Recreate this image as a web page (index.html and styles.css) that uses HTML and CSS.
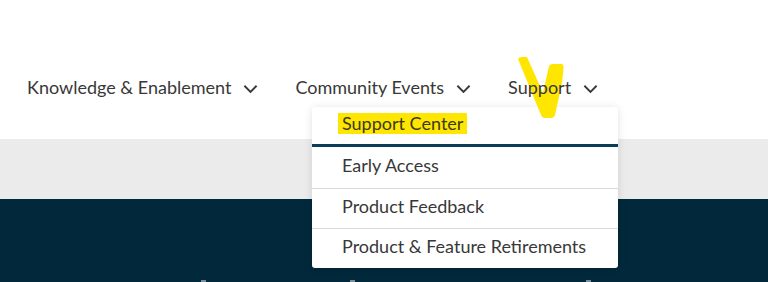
FILE: index.html
```html
<!DOCTYPE html>
<html>
<head>
<meta charset="utf-8">
<link rel="stylesheet" href="styles.css">
</head>
<body>
<header class="header">
  <nav class="nav">
    <div class="nav-item">Knowledge &amp; Enablement <svg class="chev" viewBox="0 0 16 10"><path d="M1.5 1.5 L8 8 L14.5 1.5" /></svg></div>
    <div class="nav-item">Community Events <svg class="chev" viewBox="0 0 16 10"><path d="M1.5 1.5 L8 8 L14.5 1.5" /></svg></div>
    <div class="nav-item support">
      <svg class="scribble" viewBox="0 0 50 64"><path d="M0 2 Q1 0 4 0 L9 0 L25 36 L31 9 Q32 7 35 7 L44 7 Q46 8 45.5 12 L44 26 L37 58 Q36 61 33 61 L27 61 Q24 61 23 58 Z"/></svg>
      <span class="label">Support</span> <svg class="chev" viewBox="0 0 16 10"><path d="M1.5 1.5 L8 8 L14.5 1.5" /></svg>
    </div>
  </nav>
  <div class="dropdown">
    <div class="dd-item first"><span class="hl">Support Center</span></div>
    <div class="dd-item">Early Access</div>
    <div class="dd-item">Product Feedback</div>
    <div class="dd-item last">Product &amp; Feature Retirements</div>
  </div>
</header>
<div class="band"></div>
<section class="dark">
  <div class="ticks"><span class="tick t1"></span><span class="tick t2"></span><span class="tick t3"></span></div>
</section>
</body>
</html>
```
FILE: styles.css
```css
html, body { margin: 0; padding: 0; }
body { font-family: "Lato", "Noto Sans", sans-serif; color: #383838; background: #02283b; height: 282px; overflow: hidden; }
.header { position: relative; height: 139px; background: #fff; }
.nav { display: flex; align-items: center; padding: 76px 0 0 27px; gap: 37px; height: 22px; }
.nav-item { position: relative; display: flex; align-items: center; gap: 12px; font-size: 18px; white-space: nowrap; }
.nav-item .label { position: relative; z-index: 8; }
.chev { width: 15px; height: 10px; fill: none; stroke: #383838; stroke-width: 2; margin-top: 3px; }
.scribble { position: absolute; left: 10px; top: -19px; width: 50px; height: 64px; fill: #ffe600; z-index: 7; }
.dropdown { position: absolute; left: 312px; top: 107px; width: 306px; background: #fff; border-radius: 3px; box-shadow: 0 1px 8px rgba(0,0,0,0.12); z-index: 5; }
.dd-item { height: 40px; box-sizing: border-box; display: flex; align-items: center; padding: 0 0 5px 30px; font-size: 18px; border-top: 1px solid #d9d9d9; }
.dd-item.first { height: 37px; border-top: none; border-bottom: 3px solid #0c3c58; align-items: flex-start; padding: 0 0 0 26px; box-sizing: content-box; }
.dd-item.first + .dd-item { border-top: none; height: 41px; }
.hl { background: #ffe600; color: #3a3a1a; padding: 2px 4px 3px; margin-top: 6px; line-height: 16px; }
.band { height: 60px; background: #ebebeb; }
.dark { height: 83px; background: #02283b; position: relative; }
.ticks { display: flex; padding: 81px 0 0 201px; }
.tick { display: block; width: 5px; height: 2px; background: #7b8e99; }
.t2 { margin-left: 144px; }
.t3 { margin-left: 231px; }
```
